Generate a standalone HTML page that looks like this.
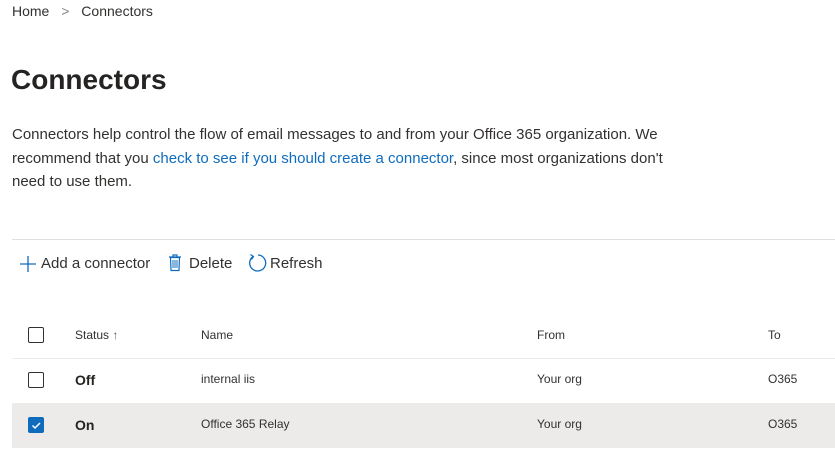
<!DOCTYPE html>
<html><head><style>
body{margin:0;width:835px;height:451px;overflow:hidden;background:#fff;font-family:"Liberation Sans",sans-serif;color:#323130;position:relative}
.a{position:absolute;white-space:nowrap}
.cb{position:absolute;width:16px;height:16px;border:1px solid #323130;border-radius:2px;box-sizing:border-box}
</style></head><body>
<div class="a" style="left:12px;top:3px;font-size:14px;color:#323130">Home <span style="color:#8a8886;margin:0 8px">&gt;</span> Connectors</div>
<div class="a" style="left:11px;top:64px;font-size:28px;font-weight:bold;color:#252423">Connectors</div>
<div class="a" style="left:12px;top:123px;font-size:15px;line-height:23.5px">Connectors help control the flow of email messages to and from your Office 365 organization. We<br>recommend that you <span style="color:#0f6cbd">check to see if you should create a connector</span>, since most organizations don't<br>need to use them.</div>
<div class="a" style="left:12px;top:239px;width:823px;height:1px;background:#e1dfdd"></div>
<svg class="a" style="left:19px;top:255px" width="18" height="18"><path d="M9 1v16M1 9h16" stroke="#0f6cbd" stroke-width="1.3"/></svg>
<div class="a" style="left:41px;top:255px;font-size:15px">Add a connector</div>
<svg class="a" style="left:167px;top:253px" width="16" height="20"><path d="M2 4h12M6 4V2h4v2M3.5 4.5l.5 13h8l.5-13z" fill="none" stroke="#0f6cbd" stroke-width="1.2"/><path d="M6 7v8M8 7v8M10 7v8" stroke="#0f6cbd" stroke-width="1"/></svg>
<div class="a" style="left:189px;top:255px;font-size:15px">Delete</div>
<svg class="a" style="left:247px;top:253px" width="20" height="20"><path d="M6 3.5A8 8 0 1 0 11 2" fill="none" stroke="#0f6cbd" stroke-width="1.3"/><path d="M3.5 1.5L6.5 3.5L4.5 6.5" fill="none" stroke="#0f6cbd" stroke-width="1.2"/></svg>
<div class="a" style="left:270px;top:255px;font-size:15px">Refresh</div>
<div class="cb" style="left:28px;top:327px"></div>
<div class="a" style="left:75px;top:328px;font-size:12px">Status <span style="color:#605e5c">↑</span></div>
<div class="a" style="left:201px;top:328px;font-size:12px">Name</div>
<div class="a" style="left:537px;top:328px;font-size:12px">From</div>
<div class="a" style="left:768px;top:328px;font-size:12px">To</div>
<div class="a" style="left:12px;top:358px;width:823px;height:1px;background:#edebe9"></div>
<div class="cb" style="left:28px;top:372px"></div>
<div class="a" style="left:75px;top:372px;font-size:14px;font-weight:bold;color:#252423">Off</div>
<div class="a" style="left:201px;top:372px;font-size:12px">internal iis</div>
<div class="a" style="left:537px;top:372px;font-size:12px">Your org</div>
<div class="a" style="left:768px;top:372px;font-size:12px">O365</div>
<div class="a" style="left:12px;top:403px;width:823px;height:45px;background:#edebe9"></div>
<div class="cb" style="left:28px;top:417px;background:#0f6cbd;border-color:#0f6cbd"><svg width="14" height="14" style="position:absolute;left:0;top:0"><path d="M3.5 7.5l2.5 2.5 5-5" fill="none" stroke="#fff" stroke-width="1.5"/></svg></div>
<div class="a" style="left:75px;top:417px;font-size:14px;font-weight:bold;color:#252423">On</div>
<div class="a" style="left:201px;top:417px;font-size:12px">Office 365 Relay</div>
<div class="a" style="left:537px;top:417px;font-size:12px">Your org</div>
<div class="a" style="left:768px;top:417px;font-size:12px">O365</div>
</body></html>
